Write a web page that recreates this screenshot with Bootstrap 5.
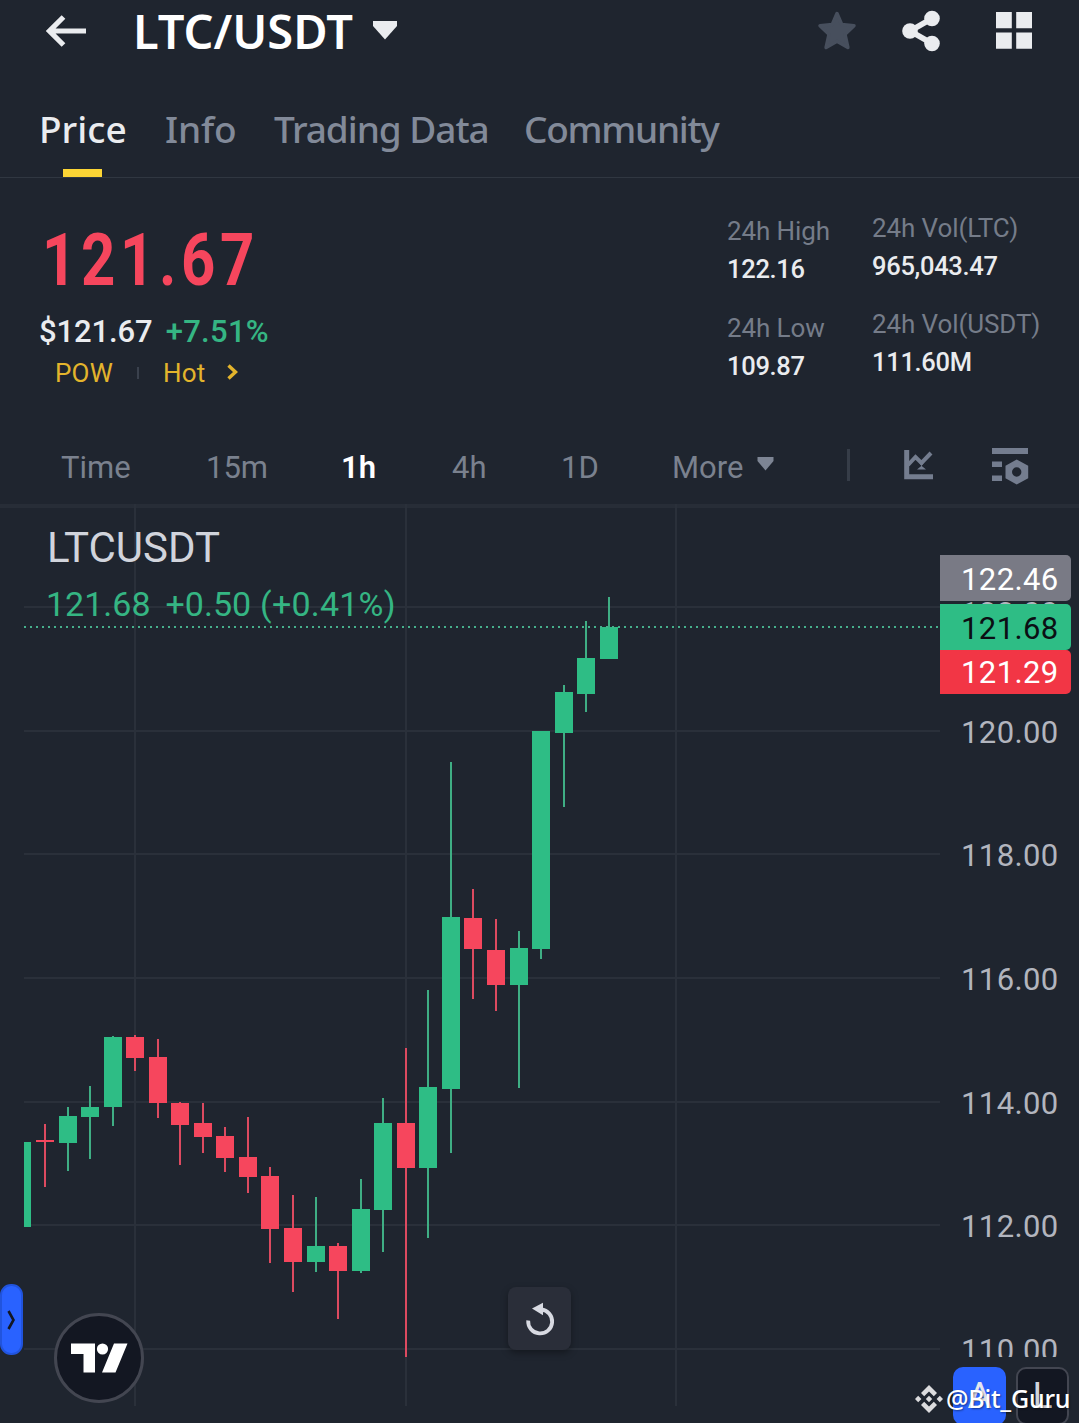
<!DOCTYPE html>
<html lang="en">
<head>
<meta charset="utf-8">
<meta name="viewport" content="width=device-width, initial-scale=1">
<title>LTC/USDT</title>
<link rel="stylesheet" href="https://cdn.jsdelivr.net/npm/bootstrap@5.3.0/dist/css/bootstrap.min.css">
<style>
:root{--bg:#1f252f;--up:#2ebd85;--down:#f6465d;--muted:#848e9c;--dim:#747b88;--text:#eaecef;--accent:#e3b42c}
body{background:var(--bg);color:var(--text);font-family:Roboto,"Liberation Sans",sans-serif;overflow:hidden}
.app-shell{height:1423px;overflow:hidden}
svg{display:block;flex:none}
.text-up{color:#35b583}
.text-down{color:var(--down)}

.top-bar{height:62px;padding:0 47px 0 46px}
.pair-title{font-family:"Noto Sans",sans-serif;font-size:47px;font-weight:600;line-height:62px;color:#fff;margin-left:45px}
.title-caret{margin:-2px 0 0 15px}

.tab-row{height:116px;padding:20px 0 0 39px;border-bottom:1px solid #303741;font-family:"Noto Sans",sans-serif;font-size:37px;font-weight:500;line-height:94px}
.tab-row .nav-link{padding:0;color:#828a99;text-align:left;white-space:nowrap}
.tab-row .nav-link.active{color:var(--text)}
.tab-row .nav-link.active::after{content:"";display:block;width:39px;height:8px;background:#fcd535;margin:-7px 0 0 24px}
.w-tab1{width:126px}.w-tab2{width:109px;letter-spacing:-.2px}.w-tab3{width:250px;letter-spacing:-1.05px}.w-tab4{letter-spacing:-1.3px}

.ticker{height:252px;padding:0 0 0 39px}
.last-price{font-size:73px;font-weight:700;line-height:84px;letter-spacing:5.7px;margin:40px 0 0 3px;width:240px;transform:scaleX(.82);transform-origin:left center;white-space:nowrap}
.sub-price{font-size:31px;font-weight:500;line-height:38px;letter-spacing:-.1px;margin-top:11px;white-space:pre}
.tag-line{font-size:26px;line-height:32px;color:var(--accent);margin-top:6px;padding-left:16px;letter-spacing:.2px}
.tag-sep{width:2px;height:12px;background:#3a414d;margin:0 24px 0 24px}
.stat-label{font-size:26px;line-height:38px;color:#757c89;white-space:nowrap;letter-spacing:-.1px}
.stat-value{font-size:25.5px;font-weight:500;line-height:38px;letter-spacing:-.3px;margin-bottom:21px}
.stat-left{width:145px;padding-top:34px}
.stat-right{width:207px;padding-top:31px}
.stat-right .stat-value{margin-bottom:20px}

.interval-row{height:74px;padding:2px 0 0 61px;font-size:31px;line-height:72px;color:#7a818e}
.interval-row .is-on{color:#fff;font-weight:600}
.w-i1{width:145px}.w-i2{width:135px}.w-i3{width:111px}.w-i4{width:109px}.w-i5{width:111px}
.tool-sep{width:3px;height:32px;background:#363d48;margin:-6px 54px 0 73px}

.chart-area{height:919px;border-top:4px solid #272d37}
.chart-canvas{position:absolute;left:0;top:-4px}
.legend{padding:20px 0 0 48px;position:relative}
.legend-name{font-size:42px;line-height:40px;color:#d1d4dc;margin-left:-1px}
.legend-values{font-size:34px;line-height:40px;margin-top:16px;margin-left:-2px;white-space:pre}
.price-axis{position:absolute;left:940px;top:-4px;width:139px;height:853px;overflow:hidden;font-size:31px;letter-spacing:.4px;color:#b2b5be}
.axis-label{position:absolute;left:21px;line-height:36px}
.axis-tag{position:absolute;left:0;width:131px;padding-left:21px;border-radius:0 5px 5px 0;color:#fff}
.drawer-handle{position:absolute;left:0;top:776px;width:23px;height:71px;border-radius:11px;background:#2962ff;border:2px solid #2154dd}
.tv-badge{position:absolute;left:54px;top:805px;width:90px;height:90px;border-radius:50%;background:#131722;border:3px solid #434651}
.reset-btn{position:absolute;left:508px;top:779px;width:63px;height:63px;border-radius:8px;background:#2a2e39;box-shadow:0 3px 7px rgba(0,0,0,.35)}
.scale-btn{position:absolute;top:859px;height:58px;width:53px;border-radius:10px;font-size:37px;line-height:58px;text-align:center;color:#e4e6ee}
.scale-auto{left:953px;background:#2962ff}
.scale-log{left:1016px;background:#131722;border:2px solid #434651;line-height:54px;color:#d1d4dc}
.watermark{position:absolute;left:915px;top:872px;height:38px;font-family:"Noto Sans",sans-serif;font-weight:500;font-size:25px;line-height:38px;letter-spacing:-.2px;color:#fff;gap:3px;text-shadow:1px 1px 2px rgba(0,0,0,.45)}
.watermark span{margin-top:-2px}
</style>
</head>
<body>
<main class="app-shell">

  <header class="top-bar d-flex align-items-center">
    <svg width="42" height="34" viewBox="0 0 42 34" fill="none" stroke="#eaecef" stroke-width="5.2"><path d="M40 17H4M17.500 3L3.500 17l14 14"/></svg>
    <h1 class="pair-title mb-0">LTC/USDT</h1>
    <svg class="title-caret" width="34" height="24" viewBox="0 0 34 24"><path d="M5 3h24v5L17 21.500 5 8z" fill="#eaecef"/></svg>
    <svg class="ms-auto" width="40" height="42" viewBox="0 0 40 42"><path d="M20 3.500l4.700 11 12.300 1.200-9 8.600 2.900 13.200L20 31.200 9.100 37.500 12 24.300l-9-8.600 12.300-1.200z" fill="#474f5d" stroke="#474f5d" stroke-width="3.500" stroke-linejoin="round"/></svg>
    <svg width="40" height="42" viewBox="0 0 40 42" style="margin-left:44px" fill="#eaecef"><path d="M31 8.500L9 21l22 12.500" fill="none" stroke="#eaecef" stroke-width="5.500"/><circle cx="31" cy="8.500" r="7.800"/><circle cx="9" cy="21" r="7.800"/><circle cx="31" cy="33.500" r="7.800"/></svg>
    <svg width="36" height="37" viewBox="0 0 36 37" style="margin:-1px 0 0 55px" fill="#eaecef"><path d="M0 0h15.800v16.200H0zM20.200 0H36v16.200H20.200zM0 20.500h15.800v16.200H0zM20.200 20.500H36v16.200H20.200z"/></svg>
  </header>

  <nav class="nav flex-nowrap tab-row">
    <a class="nav-link active w-tab1">Price</a>
    <a class="nav-link w-tab2">Info</a>
    <a class="nav-link w-tab3">Trading Data</a>
    <a class="nav-link w-tab4">Community</a>
  </nav>

  <section class="ticker d-flex">
    <div class="me-auto">
      <div class="last-price text-down">121.67</div>
      <div class="sub-price d-flex"><span>$121.67</span><span class="text-up" style="margin-left:13px;letter-spacing:.3px">+7.51%</span></div>
      <div class="tag-line d-flex align-items-center">
        <span>POW</span><span class="tag-sep"></span><span>Hot</span>
        <svg width="12" height="16" viewBox="0 0 12 16" style="margin:-2px 0 0 22px" fill="none" stroke="#e3b42c" stroke-width="3.400"><path d="M1.500 1.500L8.500 8l-7 6.500"/></svg>
      </div>
    </div>
    <div class="stat-left">
      <div class="stat-label">24h High</div><div class="stat-value">122.16</div>
      <div class="stat-label">24h Low</div><div class="stat-value">109.87</div>
    </div>
    <div class="stat-right">
      <div class="stat-label">24h Vol(LTC)</div><div class="stat-value">965,043.47</div>
      <div class="stat-label">24h Vol(USDT)</div><div class="stat-value">111.60M</div>
    </div>
  </section>

  <section class="interval-row d-flex align-items-center">
    <span class="w-i1">Time</span><span class="w-i2">15m</span><span class="w-i3 is-on">1h</span><span class="w-i4">4h</span><span class="w-i5">1D</span><span>More</span>
    <svg width="17" height="15" viewBox="0 0 17 15" style="margin:-7px 0 0 14px"><path d="M.5 0h16v4l-8 9.500L.5 4z" fill="#7d8594"/></svg>
    <span class="tool-sep"></span>
    <svg width="30" height="30" viewBox="0 0 30 30" style="margin-top:-6px" fill="none" stroke="#747d8f"><path d="M2.700 0v26.700H29" stroke-width="5"/><path d="M4 15l7.500-8 6 6L27 3" stroke-width="4"/><path d="M13 19.500l4.500-3.800 4.500 3.800zM14.500 12h6l-3 4z" fill="#747d8f" stroke="none"/></svg>
    <svg width="37" height="38" viewBox="0 0 37 38" style="margin:-5px 0 0 58px" fill="#747d8f"><path d="M0 1h36v6H0zM0 14.500h10v5.500H0zM0 28.500h10V34H0z"/><path fill-rule="evenodd" d="M24.700 12.500l11.500 6.200v12.600l-11.500 6.200-11.200-6.200V18.700zM24.700 20.300a4.700 4.700 0 1 0 .01 9.400a4.700 4.700 0 1 0-.01-9.400z"/></svg>
  </section>

  <section class="chart-area position-relative">
    <svg class="chart-canvas" id="chart" width="1079" height="919" viewBox="0 504 1079 919" shape-rendering="crispEdges"></svg>
    <div class="legend">
      <div class="legend-name">LTCUSDT</div>
      <div class="legend-values text-up d-flex"><span>121.68</span><span style="margin-left:15px">+0.50</span><span style="margin-left:9px;letter-spacing:.2px">(+0.41%)</span></div>
    </div>

    <div class="price-axis" id="axis">
      <div class="axis-tag" style="top:51px;height:46px;line-height:49px;background:#797a85">122.46</div>
      <div class="axis-tag" style="top:100px;height:46px;line-height:49px;background:#2ebd85;color:#0b0f14">121.68</div>
      <div class="axis-tag" style="top:146px;height:44px;line-height:45px;background:#f23645">121.29</div>
    </div>

    <div class="drawer-handle d-flex align-items-center justify-content-center">
      <svg width="9" height="20" viewBox="0 0 9 20" fill="none" stroke="#131722" stroke-width="2.600"><path d="M1.500 1l5 9-5 9"/></svg>
    </div>
    <div class="tv-badge d-flex align-items-center justify-content-center">
      <svg width="58" height="30" viewBox="0 0 58 30" fill="#fff"><path d="M1 .5h24v29H13.500V11H1zM44 .5h13.500L45.500 29.500H32z"/><circle cx="32.500" cy="6" r="5.600"/></svg>
    </div>
    <div class="reset-btn d-flex align-items-center justify-content-center">
      <svg width="30" height="34" viewBox="0 0 30 34"><path d="M3.200 18.500a12 12 0 1 0 13-11" fill="none" stroke="#d8dae2" stroke-width="3.800"/><path d="M7 6.500L18 .8v12.500z" fill="#d8dae2"/></svg>
    </div>
    <div class="scale-btn scale-auto">A</div>
    <div class="scale-btn scale-log">L</div>
    <div class="watermark d-flex align-items-center">
      <svg width="28" height="28" viewBox="0 0 28 28" fill="#dcdcde"><path d="M14 0l8 8-3.200 3.200L14 6.400l-4.800 4.800L6 8zM14 28l-8-8 3.200-3.200 4.800 4.800 4.800-4.800L22 20zM14 10.800l3.200 3.200-3.200 3.200-3.200-3.200zM3.200 10.800L6.400 14l-3.200 3.200L0 14zM24.800 10.800L28 14l-3.200 3.200-3.200-3.200z"/></svg>
      <span>@Bit_Guru</span>
    </div>
  </section>
</main>

<script src="https://cdn.jsdelivr.net/npm/bootstrap@5.3.0/dist/js/bootstrap.bundle.min.js"></script>
<script>
  // Candles: centre x, body top, body bottom, wick top, wick bottom, direction
  const candles = [
    [45,1140,1142,1124,1187,-1],[68,1116,1143,1107,1171,1],[90,1107,1117,1086,1159,1],
    [113,1037,1107,1036,1126,1],[135,1037,1058,1035,1071,-1],[158,1057,1103,1039,1118,-1],
    [180,1103,1125,1102,1165,-1],[203,1123,1137,1103,1153,-1],[225,1136,1158,1127,1172,-1],
    [248,1157,1177,1117,1193,-1],[270,1176,1229,1167,1263,-1],[293,1228,1262,1195,1292,-1],
    [316,1246,1262,1197,1272,1],[338,1246,1271,1243,1319,-1],[361,1209,1271,1179,1273,1],
    [383,1123,1210,1098,1252,1],[406,1123,1168,1048,1357,-1],[428,1087,1168,990,1238,1],
    [451,917,1089,762,1153,1],[473,918,949,889,999,-1],[496,950,985,919,1011,-1],
    [519,948,985,931,1088,1],[541,731,949,731,959,1],[564,692,733,685,807,1],
    [586,658,694,621,712,1],[609,627,659,597,659,1]
  ];
  const rect = (x, y, w, h, c) => `<rect x="${x}" y="${y}" width="${w}" height="${h}" fill="${c}"/>`;
  const levels = [607, 731, 854, 978, 1102, 1225, 1349];
  let out = '';
  levels.forEach(y => out += rect(24, y - 1, 916, 2, '#2a303a'));
  [135, 406, 676].forEach(x => out += rect(x - 1, 504, 2, 902, '#2a303a'));
  out += rect(24, 1142, 7, 85, '#2ebd85');
  candles.forEach(([x, t, b, wt, wb, d]) => {
    out += rect(x - 1, wt, 2, wb - wt, d > 0 ? '#3fae84' : '#dd4a60');
    out += rect(x - 9, t, 18, b - t, d > 0 ? '#2ebd85' : '#f6465d');
  });
  out += '<path d="M24 627H940" stroke="#46b08c" stroke-width="2" stroke-dasharray="2 4"/>';
  document.getElementById('chart').innerHTML = out;

  const axis = document.getElementById('axis');
  levels.forEach((y, i) => {
    const el = document.createElement('div');
    el.className = 'axis-label';
    el.style.top = (y - 504 - 17 + (i ? 0.5 : 6)) + 'px';
    el.textContent = (122 - 2 * i).toFixed(2);
    axis.prepend(el);
  });
</script>
</body>
</html>
